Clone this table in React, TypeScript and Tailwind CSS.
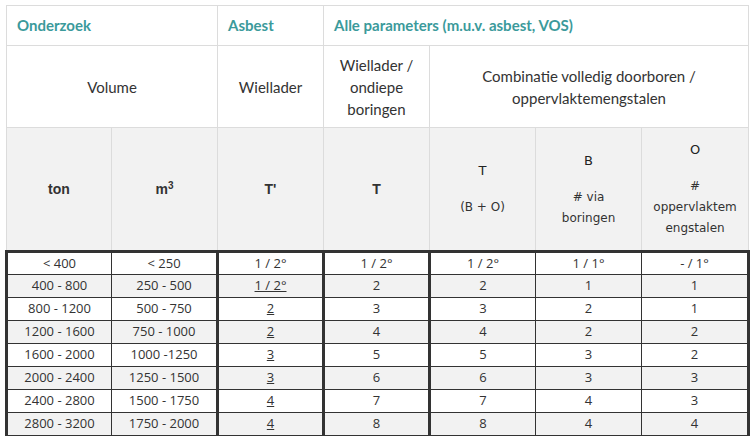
const rows: [string, string, string, string, string, string, string, boolean][] = [
  ['< 400', '< 250', '1 / 2°', '1 / 2°', '1 / 2°', '1 / 1°', '- / 1°', false],
  ['400 - 800', '250 - 500', '1 / 2°', '2', '2', '1', '1', true],
  ['800 - 1200', '500 - 750', '2', '3', '3', '2', '1', true],
  ['1200 - 1600', '750 - 1000', '2', '4', '4', '2', '2', true],
  ['1600 - 2000', '1000 -1250', '3', '5', '5', '3', '2', true],
  ['2000 - 2400', '1250 - 1500', '3', '6', '6', '3', '3', true],
  ['2400 - 2800', '1500 - 1750', '4', '7', '7', '4', '3', true],
  ['2800 - 3200', '1750 - 2000', '4', '8', '8', '4', '4', true],
]

const lato = "font-['Lato','Liberation_Sans',sans-serif]"
const hd = `border border-[#dcdcdc] ${lato}`

export default function App() {
  return (
    <div className="bg-white w-[756px] h-[436px] overflow-hidden pt-[5px] pl-[5px]">
      <table className="table-fixed border-collapse w-[744px] text-[#333]">
        <colgroup>
          <col className="w-[105px]" />
          <col className="w-[106px]" />
          <col className="w-[106px]" />
          <col className="w-[106px]" />
          <col className="w-[106px]" />
          <col className="w-[106px]" />
          <col className="w-[107px]" />
        </colgroup>
        <thead>
          <tr className="h-[40px] text-[15px] font-bold text-[#3b9a9b] text-left">
            <th colSpan={2} className={`${hd} px-[10px] font-bold`}>Onderzoek</th>
            <th className={`${hd} px-[10px] font-bold`}>Asbest</th>
            <th colSpan={4} className={`${hd} px-[10px] font-bold`}>Alle parameters (m.u.v. asbest, VOS)</th>
          </tr>
          <tr className="h-[82px] text-[15px] leading-[22px] font-normal text-center">
            <th colSpan={2} className={`${hd} font-normal`}>Volume</th>
            <th className={`${hd} font-normal`}>Wiellader</th>
            <th className={`${hd} font-normal px-2`}>Wiellader / ondiepe boringen</th>
            <th colSpan={3} className={`${hd} font-normal px-[40px]`}>Combinatie volledig doorboren / oppervlaktemengstalen</th>
          </tr>
          <tr className="h-[124px] bg-[#f2f2f2] text-center">
            <th className="border border-[#dcdcdc] font-['Liberation_Sans',Arial,sans-serif] text-[14px] font-bold">ton</th>
            <th className="border border-[#dcdcdc] font-['Liberation_Sans',Arial,sans-serif] text-[14px] font-bold">
              m<sup className="text-[10px]">3</sup>
            </th>
            <th className="border border-[#dcdcdc] font-['Liberation_Sans',Arial,sans-serif] text-[14px] font-bold">T'</th>
            <th className="border border-[#dcdcdc] font-['Liberation_Sans',Arial,sans-serif] text-[14px] font-bold">T</th>
            <th className="border border-[#dcdcdc] font-['DejaVu_Sans',Verdana,sans-serif] text-[12px] font-normal leading-[21px]">
              <p className="text-[13px] text-[#222]">T</p>
              <p className="mt-[16px]">(B + O)</p>
            </th>
            <th className="border border-[#dcdcdc] font-['DejaVu_Sans',Verdana,sans-serif] text-[12px] font-normal leading-[21px]">
              <p className="text-[13px] text-[#222]">B</p>
              <p className="mt-[16px]">
                # via
                <br />
                boringen
              </p>
            </th>
            <th className="border border-[#dcdcdc] font-['DejaVu_Sans',Verdana,sans-serif] text-[12px] font-normal leading-[21px]">
              <p className="text-[13px] text-[#222]">O</p>
              <p className="mt-[16px]">
                #
                <br />
                oppervlaktem
                <br />
                engstalen
              </p>
            </th>
          </tr>
        </thead>
        <tbody className="font-['Open_Sans','Noto_Sans',sans-serif] text-[13px] text-center">
          {rows.map((r, i) => (
            <tr key={i} className={`h-[23px] ${i % 2 ? 'bg-[#f2f2f2]' : 'bg-white'}`}>
              <td className={`border border-[#333] border-l-[3px] ${i === 0 ? 'border-t-[3px]' : ''}`}>{r[0]}</td>
              <td className={`border border-[#333] ${i === 0 ? 'border-t-[3px]' : ''}`}>{r[1]}</td>
              <td className={`border border-[#333] border-l-[3px] ${i === 0 ? 'border-t-[3px]' : ''}`}>
                {r[7] ? <span className="underline">{r[2]}</span> : r[2]}
              </td>
              <td className={`border border-[#333] border-l-[3px] ${i === 0 ? 'border-t-[3px]' : ''}`}>{r[3]}</td>
              <td className={`border border-[#333] border-l-[3px] ${i === 0 ? 'border-t-[3px]' : ''}`}>{r[4]}</td>
              <td className={`border border-[#333] ${i === 0 ? 'border-t-[3px]' : ''}`}>{r[5]}</td>
              <td className={`border border-[#333] border-r-[3px] ${i === 0 ? 'border-t-[3px]' : ''}`}>{r[6]}</td>
            </tr>
          ))}
        </tbody>
      </table>
    </div>
  )
}
